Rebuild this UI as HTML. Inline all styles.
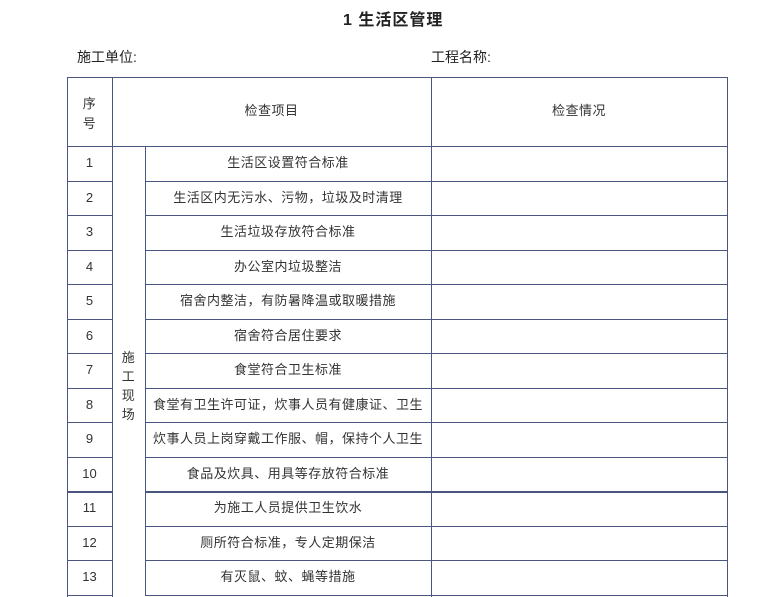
<!DOCTYPE html>
<html><head><meta charset="utf-8"><style>
body{margin:0;width:760px;height:586px;overflow:hidden;background:#fff;font-family:"Liberation Sans","Noto Sans CJK SC",sans-serif;color:#333;position:relative}
.t{position:absolute;white-space:nowrap}
.h{position:absolute;background:#4a5580;height:1px}
.v{position:absolute;background:#4a5580;width:1px}
.c{position:absolute;text-align:center;font-size:13px;line-height:16px;letter-spacing:0.5px;white-space:nowrap}
</style></head><body>
<div class="t" style="left:343px;top:6px;font-size:16px;font-weight:bold;color:#222;letter-spacing:1px">1 生活区管理</div>
<div class="t" style="left:77px;top:47px;font-size:14px;color:#222">施工单位:</div>
<div class="t" style="left:431px;top:47px;font-size:14px;color:#222">工程名称:</div>
<div class="h" style="left:67px;top:77px;width:661px"></div>
<div class="h" style="left:67px;top:146px;width:661px"></div>
<div class="v" style="left:67px;top:77px;height:520px"></div>
<div class="v" style="left:112px;top:77px;height:520px"></div>
<div class="v" style="left:145px;top:146px;height:450px"></div>
<div class="v" style="left:431px;top:77px;height:520px"></div>
<div class="v" style="left:727px;top:77px;height:520px"></div>
<div class="c" style="left:67px;top:94px;width:45px;line-height:20px">序<br>号</div>
<div class="c" style="left:112px;top:103px;width:319px">检查项目</div>
<div class="c" style="left:431px;top:103px;width:296px">检查情况</div>
<div class="c" style="left:112px;top:348px;width:33px;line-height:19px">施<br>工<br>现<br>场</div>
<div id="rows"></div>
<script>
var items=["生活区设置符合标准","生活区内无污水、污物，垃圾及时清理","生活垃圾存放符合标准","办公室内垃圾整洁","宿舍内整洁，有防暑降温或取暖措施","宿舍符合居住要求","食堂符合卫生标准","食堂有卫生许可证，炊事人员有健康证、卫生","炊事人员上岗穿戴工作服、帽，保持个人卫生","食品及炊具、用具等存放符合标准","为施工人员提供卫生饮水","厕所符合标准，专人定期保洁","有灭鼠、蚊、蝇等措施"];
var h="";
for(var i=0;i<13;i++){var y=146+i*34.5;var th=(i==9)?'height:2px;':'';
h+='<div class="h" style="'+th+'left:67px;top:'+(y+34.5).toFixed(0)+'px;width:45px"></div><div class="h" style="'+th+'left:145px;top:'+(y+34.5).toFixed(0)+'px;width:583px"></div>';
h+='<div class="c" style="left:67px;top:'+(y+9).toFixed(0)+'px;width:45px;letter-spacing:0">'+(i+1)+'</div>';
h+='<div class="c" style="left:145px;top:'+(y+9).toFixed(0)+'px;width:286px">'+items[i]+'</div>';}
document.getElementById("rows").innerHTML=h;
</script>
</body></html>
